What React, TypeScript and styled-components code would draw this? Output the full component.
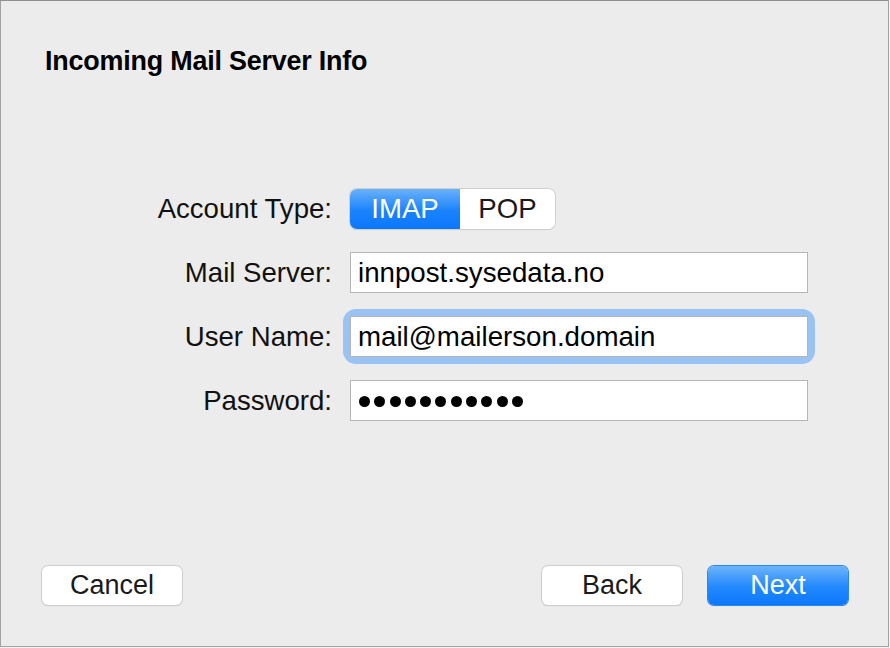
import React from "react";
import styled, { createGlobalStyle } from "styled-components";

const Global = createGlobalStyle`
  html, body { margin: 0; padding: 0; background: #f4f4f4; }
  body { font-family: "Liberation Sans", Arial, sans-serif; }
`;

const Window = styled.div`
  box-sizing: border-box;
  width: 889px;
  height: 647px;
  background: #ececec;
  border: 1px solid #a2a2a2;
  border-top-color: #8e8e8e;
  display: flex;
  flex-direction: column;
  color: #000;
`;

const Title = styled.h1`
  margin: 0;
  padding: 44px 0 0 44px;
  font-size: 26.9px;
  line-height: 32px;
  font-weight: bold;
  letter-spacing: -0.2px;
`;

const Form = styled.div`
  display: grid;
  grid-template-columns: 331px 458px;
  column-gap: 18px;
  row-gap: 23px;
  margin-top: 112px;
  align-items: center;
`;

const Label = styled.label`
  justify-self: end;
  font-size: 27.6px;
  color: #111;
`;

const Segmented = styled.div`
  display: flex;
  width: 205px;
  height: 40px;
  box-sizing: border-box;
  border-radius: 7px;
  overflow: hidden;
  background: #fff;
  box-shadow: 0 0 0 1px #cfcfcf, 0 1px 1px rgba(0, 0, 0, 0.18);
`;

const Segment = styled.div<{ $active?: boolean; $w: number }>`
  width: ${(p) => p.$w}px;
  display: flex;
  align-items: center;
  justify-content: center;
  font-size: 27.6px;
  color: ${(p) => (p.$active ? "#fff" : "#1a1a1a")};
  background: ${(p) =>
    p.$active ? "linear-gradient(#6ab2fb, #1a82fc 55%, #0b78fc)" : "#fff"};
`;

const FieldWrap = styled.div<{ $focus?: boolean }>`
  width: 458px;
  border-radius: 6px;
  box-shadow: ${(p) => (p.$focus ? "0 0 0 7px #98c3f2" : "none")};
`;

const Field = styled.div`
  box-sizing: border-box;
  height: 41px;
  background: #fff;
  border: 1px solid #b5b5b5;
  padding: 0 0 0 7px;
  display: flex;
  align-items: center;
  font-size: 27.7px;
  color: #000;
`;

const Dots = styled.div`
  display: flex;
  gap: 4.3px;
  padding-left: 1px;
  padding-top: 2px;
`;

const Dot = styled.span`
  width: 11px;
  height: 11px;
  border-radius: 50%;
  background: #000;
`;

const Footer = styled.div`
  margin-top: auto;
  margin-bottom: 41px;
  padding: 0 40px 0 41px;
  display: flex;
  align-items: center;
`;

const Spacer = styled.div`
  flex: 1;
`;

const Button = styled.button<{ $primary?: boolean }>`
  width: 140px;
  height: 39px;
  border: none;
  border-radius: 6px;
  font-family: "Liberation Sans", Arial, sans-serif;
  font-size: 27px;
  padding: 0;
  margin-left: ${(p) => (p.$primary ? "26px" : "0")};
  color: ${(p) => (p.$primary ? "#fff" : "#1a1a1a")};
  background: ${(p) =>
    p.$primary ? "linear-gradient(#6cb4fb, #2188fc 55%, #0c79fc)" : "#fff"};
  box-shadow: ${(p) =>
    p.$primary
      ? "0 0 0 1px #2a86f0, 0 1px 1px rgba(0,0,0,0.15)"
      : "0 0 0 1px #cdcdcd, 0 1px 1px rgba(0,0,0,0.2)"};
`;

export default function App() {
  return (
    <>
      <Global />
      <Window>
        <Title>Incoming Mail Server Info</Title>
        <Form>
          <Label>Account Type:</Label>
          <Segmented>
            <Segment $active $w={110}>IMAP</Segment>
            <Segment $w={95}>POP</Segment>
          </Segmented>
          <Label>Mail Server:</Label>
          <FieldWrap>
            <Field>innpost.sysedata.no</Field>
          </FieldWrap>
          <Label>User Name:</Label>
          <FieldWrap $focus>
            <Field>mail@mailerson.domain</Field>
          </FieldWrap>
          <Label>Password:</Label>
          <FieldWrap>
            <Field>
              <Dots>
                {Array.from({ length: 11 }).map((_, i) => (
                  <Dot key={i} />
                ))}
              </Dots>
            </Field>
          </FieldWrap>
        </Form>
        <Footer>
          <Button>Cancel</Button>
          <Spacer />
          <Button>Back</Button>
          <Button $primary>Next</Button>
        </Footer>
      </Window>
    </>
  );
}
